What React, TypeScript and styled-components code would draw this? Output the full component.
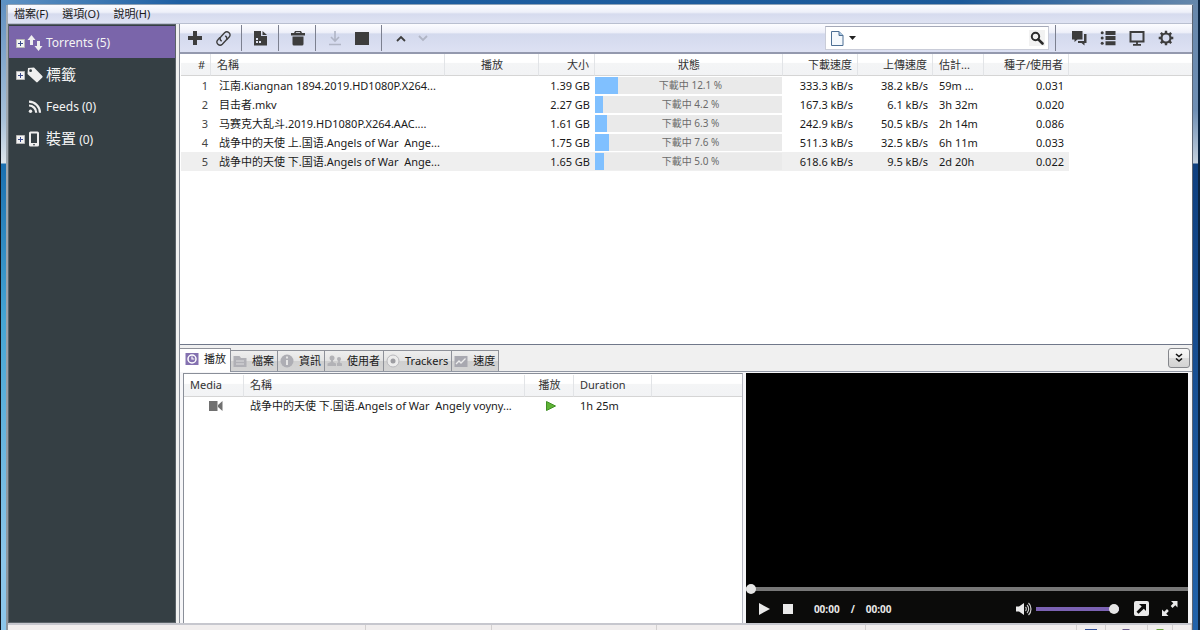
import React from "react";
import styled, { createGlobalStyle, css } from "styled-components";

const Global = createGlobalStyle`
  *, *::before, *::after { box-sizing: border-box; }
  body { margin: 0; }
  body, button, input, table {
    font-family: "Noto Sans", "Noto Sans CJK TC", sans-serif;
    font-size: 11px;
    line-height: 16px;
    color: #1a1a1a;
  }
  button { border: 0; padding: 0; background: none; }
  svg { display: block; flex: none; }
`;

/* ---------- window ---------- */

const Frame = styled.div`
  display: flex;
  height: 100vh;
  padding: 5px 7px 0 8px;
  overflow: hidden;
  background:
    linear-gradient(#10141c, #10141c) left / 1px 100% no-repeat,
    linear-gradient(#0b2440, #0b2440) right / 2px 100% no-repeat,
    linear-gradient(#a5adb4, #8d959c) 6px 5px / 2px 100% no-repeat,
    linear-gradient(90deg, #5f93c4, #1f60a3 15%, #1c5a9a 80%, #6688ac) top / 100% 4px no-repeat,
    linear-gradient(#5f8fc0 0, #a9c2da 120px, #dde5ec 163px, #1a6fb0 164px, #45a5d4 320px, #8cc6ea 560px) left / 8px 100% no-repeat,
    linear-gradient(#6787ab 0, #6f8fb4 110px, #c3d0de 163px, #0f4080 164px, #2163ab 100%) right / 7px 100% no-repeat,
    #8fa3b8;
`;

const Window = styled.div`
  flex: 1;
  min-width: 0;
  display: flex;
  flex-direction: column;
  border-right: 1px solid #5b6472;
  background: #f0f0f0;
`;

const MenuBar = styled.nav`
  display: flex;
  align-items: center;
  gap: 14px;
  height: 19px;
  padding: 0 6px;
  border-bottom: 1px solid #b9bfd0;
  background: linear-gradient(#fbfcff 0, #eef0f9 40%, #d6dbee 50%, #dfe3f3 100%);
`;

const MenuItem = styled.button`
  line-height: 18px;
`;

const Body = styled.div`
  flex: 1;
  min-height: 0;
  display: flex;
  border-bottom: 2px solid #c6c7ce;
`;

/* ---------- sidebar ---------- */

const Sidebar = styled.nav`
  flex: none;
  width: 168px;
  padding-top: 1px;
  border: 1px solid #5a6268;
  background: #353f44;
`;

const SideList = styled.ul`
  margin: 0;
  padding: 0;
  list-style: none;
`;

const SideItem = styled.li<{ $active?: boolean }>`
  display: flex;
  align-items: center;
  height: 32px;
  padding-top: 2px;
  padding-left: 7px;
  background: ${(p) => (p.$active ? "#7a65aa" : "transparent")};
`;

const ExpanderSlot = styled.span`
  width: 9px;
`;

const Expander = styled.button`
  display: block;
`;

const SideLink = styled.a`
  display: flex;
  align-items: center;
  gap: 3px;
  padding-left: 2px;
  color: #f4f4f4;
  font-size: 12px;
  text-decoration: none;
`;

const SideText = styled.span`
  white-space: pre;
`;

const SideCjk = styled.span`
  font-size: 15px;
`;

/* ---------- toolbar ---------- */

const Main = styled.main`
  flex: 1;
  min-width: 0;
  display: flex;
  flex-direction: column;
  margin-left: 3px;
  border-left: 1px solid #8a8f99;
`;

const Toolbar = styled.div`
  display: flex;
  align-items: center;
  height: 30px;
  padding-right: 12px;
  border-bottom: 2px solid #9499ae;
  background: linear-gradient(#fcfcff 0, #eef0f9 30%, #d3d9ed 36%, #dde1f3 100%);
`;

const ToolButton = styled.button<{ $narrow?: boolean }>`
  display: flex;
  align-items: center;
  justify-content: center;
  width: ${(p) => (p.$narrow ? 22 : 29)}px;
  height: 26px;
  color: #3d3d3d;
  &:disabled { color: #b0b5c5; }
`;

const ToolSep = styled.span<{ $wide?: boolean }>`
  width: 1px;
  height: 26px;
  margin: 0 ${(p) => (p.$wide ? 8 : 4)}px 0 3px;
  background: #7c8090;
`;

const Search = styled.form`
  display: flex;
  align-items: center;
  width: 224px;
  height: 24px;
  margin: 0 3px 0 auto;
  padding: 0 3px 0 5px;
  border: 1px solid #c9ccd8;
  border-top-color: #a5a9b8;
  background: #fff;
`;

const SearchInput = styled.input`
  flex: 1;
  min-width: 0;
  border: 0;
  outline: 0;
  background: none;
`;

const FilterButton = styled.button`
  display: flex;
  align-items: center;
  gap: 5px;
`;

const FindButton = styled.button`
  padding: 1px;
  background: #f2f2f2;
`;

/* ---------- tables ---------- */

const TorrentPane = styled.section`
  flex: 291 1 0;
  min-height: 0;
  overflow: hidden;
  padding-left: 1px;
  border-bottom: 1px solid #70788a;
  background: #fff;
`;

const DataTable = styled.table`
  width: 100%;
  table-layout: fixed;
  border-collapse: separate;
  border-spacing: 0;
`;

const Th = styled.th<{ $align?: string }>`
  height: 22px;
  padding: 0 5px 0 6px;
  border-right: 1px solid #e2e4e7;
  border-bottom: 1px solid #d5d5d5;
  background: linear-gradient(#fff 0, #fff 40%, #f4f5f6 45%, #f2f3f5 100%);
  color: #333;
  font-weight: 400;
  text-align: ${(p) => p.$align ?? "left"};
  white-space: nowrap;
  overflow: hidden;
  &:last-child { border-right: 0; }
`;

const Td = styled.td<{ $align?: string; $shade?: boolean; $kind?: "index" | "name" | "bar" }>`
  height: 19px;
  padding: 0 5px 0 6px;
  background: ${(p) => (p.$shade ? "#efefef" : "transparent")};
  text-align: ${(p) => p.$align ?? "left"};
  white-space: pre;
  overflow: hidden;
  ${(p) => p.$kind === "index" && css`padding: 0 3px 0 0; color: #444;`}
  ${(p) => p.$kind === "name" && css`padding: 0 0 0 8px;`}
  ${(p) => p.$kind === "bar" && css`padding: 0 1px 0 0;`}
`;

const Simplified = styled.span`
  font-family: "Noto Sans", "Noto Sans CJK SC", sans-serif;
`;

const Bar = styled.div`
  display: grid;
  height: 17px;
  background: #eaeaea;
`;

const BarFill = styled.div`
  grid-area: 1 / 1;
  background: #80c0ff;
`;

const BarText = styled.span`
  grid-area: 1 / 1;
  padding-left: 4px;
  color: #6a6a6a;
  font-size: 10px;
  text-align: center;
`;

/* ---------- details ---------- */

const Details = styled.section`
  flex: 279 1 0;
  min-height: 0;
  display: flex;
  flex-direction: column;
  background: #f0f0f0;
`;

const TabRow = styled.div`
  display: flex;
  align-items: center;
  justify-content: space-between;
  height: 27px;
  padding-right: 2px;
  border-bottom: 1px solid #9197a3;
`;

const Tabs = styled.div`
  display: flex;
  align-items: flex-end;
  align-self: flex-end;
`;

const Tab = styled.button<{ $active?: boolean }>`
  display: flex;
  align-items: center;
  gap: 5px;
  height: 21px;
  padding: 0 3px 0 2px;
  border: 1px solid #8e9199;
  border-width: 1px 1px 0 0;
  background: linear-gradient(#eeeeee 0, #e4e4e4 48%, #d0d0d0 50%, #d4d4d4 100%);
  ${(p) =>
    p.$active &&
    css`
      height: 24px;
      margin-bottom: -1px;
      padding: 0 4px 2px 5px;
      background: #fff;
    `}
`;

const Collapse = styled.button`
  display: flex;
  align-items: center;
  justify-content: center;
  width: 22px;
  height: 20px;
  border: 1px solid #85878c;
  border-radius: 3px;
  background: linear-gradient(#f8f8f8 0, #ededed 50%, #dcdcdc 52%, #d3d3d3 100%);
`;

const Panels = styled.div`
  flex: 1;
  min-height: 0;
  display: flex;
  gap: 3px;
  padding: 1px 4px 0 3px;
  background: #f6f6f8;
`;

const MediaPane = styled.div`
  flex: 559 1 0;
  min-width: 0;
  overflow: hidden;
  padding-top: 1px;
  border: 1px solid #8a8f99;
  border-bottom: 0;
  border-right-color: #b5b6c0;
  background: #fff;
`;

const MediaIcon = styled.span`
  display: flex;
  justify-content: center;
  padding-left: 2px;
`;

/* ---------- player ---------- */

const Player = styled.div`
  flex: 443 1 0;
  min-width: 0;
  display: flex;
  flex-direction: column;
  background: #000;
`;

const Video = styled.div`
  flex: 1;
`;

const Slider = styled.input<{ $track: string }>`
  appearance: none;
  display: block;
  width: 100%;
  height: 10px;
  margin: 0;
  background: none;
  &::-webkit-slider-runnable-track {
    height: 4px;
    background: ${(p) => p.$track};
  }
  &::-webkit-slider-thumb {
    appearance: none;
    width: 10px;
    height: 10px;
    margin-top: -3px;
    border-radius: 50%;
    background: #e6e6e6;
  }
`;

const SeekRow = styled.div`
  background: linear-gradient(#000 0, #000 50%, #0b0b0a 50%);
`;

const Controls = styled.div`
  display: flex;
  align-items: center;
  height: 29px;
  padding: 0 10px 0 12px;
  background: #0b0b0a;
`;

const Transport = styled.div`
  display: flex;
  align-items: center;
  gap: 13px;
`;

const Clock = styled.div`
  display: flex;
  gap: 11px;
  margin: 0 auto 0 21px;
  color: #e8e8e8;
  font-family: "Open Sans", sans-serif;
  font-size: 10px;
  font-weight: 700;
`;

const Volume = styled.div`
  display: flex;
  align-items: center;
  gap: 4px;
  width: 103px;
  margin-right: 15px;
`;

const ViewButtons = styled.div`
  display: flex;
  align-items: center;
  gap: 13px;
`;

/* ---------- status bar ---------- */

const StatusBar = styled.footer`
  display: flex;
  height: 5px;
  overflow: hidden;
  background: #f1eeee;
`;

const StatusCell = styled.span<{ $grow: number }>`
  flex: ${(p) => p.$grow} 1 0;
  display: flex;
  justify-content: center;
  padding-top: 4px;
  border-right: 1px solid #d3d0d0;
`;

/* ---------- icons ---------- */

const Plus = () => (
  <svg width="16" height="16" viewBox="0 0 16 16" fill="currentColor">
    <path d="M6 1h4v5h5v4h-5v5H6v-5H1V6h5z" />
  </svg>
);
const LinkIcon = () => (
  <svg width="17" height="17" viewBox="0 0 17 17" fill="none" stroke="currentColor" strokeWidth="1.4" strokeLinecap="round">
    <path d="M6.300 10.800c-1.500-1-1.600-2.900-.4-4.100l3.700-3.900c2.800-2.800 7.400 1.300 4.600 4.200l-2.300 2.400" />
    <path d="M10.600 6.200c1.500 1 1.600 2.900.4 4.100l-3.700 3.900c-2.800 2.800-7.400-1.300-4.600-4.200l2-2.200" />
  </svg>
);
const NewTorrent = () => (
  <svg width="14" height="16" viewBox="0 0 14 16" fill="currentColor">
    <path d="M0 1h7v5h6v9.500H0z" />
    <path d="M8.500 1l4.500 4H8.500z" />
    <path d="M2 8h2v2H2zM2 11h2v2H2zM5 11h2v2H5z" fill="#dfe3f2" />
  </svg>
);
const Trash = () => (
  <svg width="16" height="16" viewBox="0 0 16 16" fill="currentColor">
    <path d="M5 1h6l1 2h3v2.500H1V3h3zM6 2.200L5.700 3h4.600L10 2.200z" fillRule="evenodd" />
    <path d="M2.500 6.500h11v7.500a1.500 1.500 0 0 1-1.500 1.500H4a1.500 1.500 0 0 1-1.500-1.500z" />
  </svg>
);
const Download = () => (
  <svg width="14" height="16" viewBox="0 0 14 16" fill="none" stroke="currentColor" strokeWidth="1.600">
    <path d="M7 1v10M3 7l4 4 4-4M1 14.500h12" />
  </svg>
);
const StopIcon = () => (
  <svg width="17" height="14" viewBox="0 0 17 14" fill="currentColor">
    <path d="M0 1h14v13H0z" />
  </svg>
);
const Chevron = ({ down }: { down?: boolean }) => (
  <svg width="10" height="7" viewBox="0 0 10 7" fill="none" stroke="currentColor" strokeWidth="1.800">
    <path d={down ? "M1 1l4 4 4-4" : "M1 6l4-4 4 4"} />
  </svg>
);
const PageIcon = () => (
  <svg width="13" height="15" viewBox="0 0 13 15" fill="#f5f9fd" stroke="#4d6f94" strokeWidth="1">
    <path d="M.5.500h7.500l4 4v10H.5z" />
    <path d="M8 .5v4h4" fill="#a9c6e2" />
  </svg>
);
const Caret = () => (
  <svg width="7" height="4" viewBox="0 0 7 4" fill="#222"><path d="M0 0h7L3.500 4z" /></svg>
);
const Magnifier = () => (
  <svg width="14" height="14" viewBox="0 0 14 14" fill="none" stroke="#2b2b2b">
    <circle cx="5.500" cy="5.500" r="3.700" strokeWidth="2" />
    <path d="M8.300 8.300l4.200 4.200" strokeWidth="2.600" strokeLinecap="round" />
  </svg>
);
const Chat = () => (
  <svg width="16" height="16" viewBox="0 0 16 16" fill="currentColor">
    <path d="M1 1h10.500v8.500H6.500L3.500 12V9.500H1z" />
    <path d="M13 4h2.500v9h-2v2.500L10.500 13H7v-2h6z" />
  </svg>
);
const ListIcon = () => (
  <svg width="16" height="16" viewBox="0 0 16 16" fill="currentColor">
    <path d="M5.500 1H15.500v4H5.500zM5.500 6H15.500v4H5.500zM5.500 11.200H15.500V15.200H5.500z" />
    <circle cx="2.200" cy="2.800" r="1.500" /><circle cx="2.200" cy="8" r="1.500" /><circle cx="2.200" cy="13.200" r="1.500" />
  </svg>
);
const Monitor = () => (
  <svg width="16" height="16" viewBox="0 0 16 16" fill="none" stroke="currentColor">
    <path d="M1.500 2h13v9.500h-13z" strokeWidth="2" />
    <path d="M8 11.500v3M4 14.800h8" strokeWidth="1.800" />
  </svg>
);
const Gear = () => (
  <svg width="16" height="16" viewBox="0 0 16 16" fill="none" stroke="currentColor">
    <circle cx="8" cy="8" r="4.500" strokeWidth="2.200" />
    <path d="M8 .7v2.500M8 12.800v2.500M.7 8H3.200M12.800 8h2.500M2.800 2.800l1.800 1.800M11.400 11.400l1.800 1.800M13.200 2.800l-1.800 1.800M4.600 11.400l-1.800 1.800" strokeWidth="2.400" />
  </svg>
);
const PlusBox = () => (
  <svg width="9" height="9" viewBox="0 0 9 9">
    <path d="M.5.500h8v8h-8z" fill="#f3f3f3" stroke="#b8b8b8" />
    <path d="M2 4.500h5M4.500 2v5" stroke="#3a4a8a" />
  </svg>
);
const UpDown = () => (
  <svg width="16" height="16" viewBox="0 0 16 16" fill="#efefef">
    <path d="M4.500 0l4 5H6v5H3V5H.5zM11.500 16l-4-5H10V6h3v5h2.500z" />
  </svg>
);
const TagIcon = () => (
  <svg width="16" height="16" viewBox="0 0 16 16" fill="#efefef">
    <path d="M1 1l6-.5 8.300 8.500c.5.500.5 1 0 1.500l-4.600 4.600c-.5.500-1 .5-1.500 0L.5 7zM3.600 2.300a1.400 1.400 0 1 0 0 2.800 1.400 1.400 0 0 0 0-2.800z" fillRule="evenodd" />
  </svg>
);
const RssIcon = () => (
  <svg width="16" height="16" viewBox="0 0 16 16" fill="none" stroke="#efefef" strokeWidth="2.200">
    <path d="M2 6.500c4 0 7.200 3.200 7.200 7.200M2 2.700c6.100 0 11 4.900 11 11" />
    <circle cx="3.500" cy="12.200" r="1.700" fill="#efefef" stroke="none" />
  </svg>
);
const DeviceIcon = () => (
  <svg width="16" height="16" viewBox="0 0 16 16" fill="#efefef">
    <path d="M3.500.500h7a1.500 1.500 0 0 1 1.500 1.500v12a1.500 1.500 0 0 1-1.500 1.500h-7A1.500 1.500 0 0 1 2 14V2A1.500 1.500 0 0 1 3.500.500zM4 2.500v9.500h6V2.500zM6 13.200h2v1H6z" fillRule="evenodd" />
  </svg>
);
const ClockIcon = () => (
  <svg width="14" height="14" viewBox="0 0 14 14">
    <path d="M.5 1h13v12H.5z" fill="#8471b0" />
    <circle cx="7" cy="7" r="4" fill="#8471b0" stroke="#fff" strokeWidth="1.500" />
    <path d="M7 4.500V7h2.300" fill="none" stroke="#fff" strokeWidth="1.200" />
  </svg>
);
const FolderIcon = () => (
  <svg width="14" height="14" viewBox="0 0 14 14" fill="#b0b0b6">
    <path d="M.5 2h6l1.500 2h5.500v9H.5z" />
    <path d="M3 7h8M3 10h8" stroke="#dcdcde" />
  </svg>
);
const InfoIcon = () => (
  <svg width="14" height="14" viewBox="0 0 14 14">
    <circle cx="7" cy="7" r="6.500" fill="#aeaeb4" />
    <path d="M7 2.500v2M7 6v5" stroke="#e6e6e6" strokeWidth="2" />
  </svg>
);
const PeersIcon = () => (
  <svg width="15" height="14" viewBox="0 0 15 14" fill="#b2b2b6">
    <circle cx="5" cy="4" r="2.500" />
    <path d="M4 6h2v2l3 1.500V12H.5V9.500L4 8z" />
    <circle cx="12" cy="5" r="2" />
    <path d="M11.300 6h1.500v2.500l2.200 1V12h-5V9l1.300-.5z" />
  </svg>
);
const TargetIcon = () => (
  <svg width="14" height="14" viewBox="0 0 14 14">
    <circle cx="7" cy="7" r="6" fill="#ececec" stroke="#b8b8bc" />
    <circle cx="7" cy="7" r="2.500" fill="#9d9da2" />
  </svg>
);
const GraphIcon = () => (
  <svg width="14" height="14" viewBox="0 0 14 14">
    <path d="M.5 2h13v11H.5z" fill="#a8a8b0" />
    <path d="M2 10l3-3 2 2 4.500-4.500" fill="none" stroke="#ededed" strokeWidth="1.300" />
  </svg>
);
const Chevrons = () => (
  <svg width="8" height="10" viewBox="0 0 8 10" fill="none" stroke="#111" strokeWidth="1.600">
    <path d="M1 1l3 2.500L7 1M1 5.500L4 8l3-2.500" />
  </svg>
);
const Camera = () => (
  <svg width="14" height="12" viewBox="0 0 14 12" fill="#707070">
    <path d="M0 1h8.500v10H0zM9 5L13.500 1v10l-4.500-4z" />
  </svg>
);
const GreenPlay = () => (
  <svg width="10" height="10" viewBox="0 0 10 10"><path d="M.5.500L9.500 5l-9 4.500z" fill="#5fb336" stroke="#3f8f24" /></svg>
);
const PlayIcon = () => (
  <svg width="12" height="12" viewBox="0 0 12 12" fill="#eaeaea"><path d="M1 0l11 6-11 6z" /></svg>
);
const StopSmall = () => (
  <svg width="10" height="10" viewBox="0 0 10 10" fill="#eaeaea"><path d="M0 0h10v10H0z" /></svg>
);
const Speaker = () => (
  <svg width="16" height="14" viewBox="0 0 16 14" fill="#eaeaea">
    <path d="M0 4.500h3L8 1v12L3 9.500H0z" />
    <path d="M9.500 5c1 1 1 3 0 4M11 3c2.200 2 2.200 6 0 8M12.500 1c3.300 3 3.300 9 0 12" fill="none" stroke="#cfcfcf" strokeWidth="1.200" />
  </svg>
);
const PopOut = () => (
  <svg width="15" height="15" viewBox="0 0 15 15">
    <rect width="15" height="15" rx="2" fill="#eaeaea" />
    <path d="M5 3h7v7l-2.200-2.200-5.300 5-2-2 5.200-5.200z" fill="#0b0b0a" />
  </svg>
);
const Expand = () => (
  <svg width="16" height="15" viewBox="0 0 16 15" fill="#eaeaea">
    <path d="M9 0h6.500v6.500l-2.200-2.200-2.800 2.600-1.800-1.800 2.600-2.800z" />
    <path d="M6.500 15H0V8.500l2.200 2.200 2.800-2.600 1.800 1.800-2.600 2.800z" />
  </svg>
);

/* ---------- data ---------- */

const torrents = [
  { name: "江南.Kiangnan 1894.2019.HD1080P.X264...", size: "1.39 GB", pct: 12.1, down: "333.3 kB/s", up: "38.2 kB/s", eta: "59m ...", ratio: "0.031" },
  { name: "目击者.mkv", size: "2.27 GB", pct: 4.2, down: "167.3 kB/s", up: "6.1 kB/s", eta: "3h 32m", ratio: "0.020" },
  { name: "马赛克大乱斗.2019.HD1080P.X264.AAC....", size: "1.61 GB", pct: 6.3, down: "242.9 kB/s", up: "50.5 kB/s", eta: "2h 14m", ratio: "0.086" },
  { name: "战争中的天使 上.国语.Angels of War  Ange...", size: "1.75 GB", pct: 7.6, down: "511.3 kB/s", up: "32.5 kB/s", eta: "6h 11m", ratio: "0.033" },
  { name: "战争中的天使 下.国语.Angels of War  Ange...", size: "1.65 GB", pct: 5.0, down: "618.6 kB/s", up: "9.5 kB/s", eta: "2d 20h", ratio: "0.022" },
];

const columns = [
  { label: "#", width: 30, align: "right" },
  { label: "名稱", width: 234 },
  { label: "播放", width: 94, align: "center" },
  { label: "大小", width: 56, align: "right" },
  { label: "狀態", width: 188, align: "center" },
  { label: "下載速度", width: 75, align: "right" },
  { label: "上傳速度", width: 75, align: "right" },
  { label: "估計...", width: 51 },
  { label: "種子/使用者", width: 85, align: "right" },
];

const mediaColumns = [
  { label: "Media", width: 60 },
  { label: "名稱", width: 281 },
  { label: "播放", width: 49, align: "center" },
  { label: "Duration", width: 78 },
];

const tabs = [
  { label: "播放", icon: <ClockIcon /> },
  { label: "檔案", icon: <FolderIcon /> },
  { label: "資訊", icon: <InfoIcon /> },
  { label: "使用者", icon: <PeersIcon /> },
  { label: "Trackers", icon: <TargetIcon /> },
  { label: "速度", icon: <GraphIcon /> },
];

const sideItems = [
  { text: "Torrents (5)", icon: <UpDown />, expandable: true },
  { cjk: "標籤", icon: <TagIcon />, expandable: true },
  { text: "Feeds (0)", icon: <RssIcon />, expandable: false },
  { cjk: "裝置", text: " (0)", icon: <DeviceIcon />, expandable: true },
];

type Column = { label: string; width: number; align?: string };

function TableHead({ cols }: { cols: Column[] }) {
  return (
    <>
      <colgroup>
        {cols.map((c) => <col key={c.label} width={c.width} />)}
        <col />
      </colgroup>
      <thead>
        <tr>
          {cols.map((c) => <Th key={c.label} $align={c.align} scope="col">{c.label}</Th>)}
          <Th as="td" />
        </tr>
      </thead>
    </>
  );
}

export default function App() {
  return (
    <Frame>
      <Global />
      <Window>
        <MenuBar>
          <MenuItem>檔案(F)</MenuItem>
          <MenuItem>選項(O)</MenuItem>
          <MenuItem>說明(H)</MenuItem>
        </MenuBar>
        <Body>
          <Sidebar>
            <SideList>
              {sideItems.map((item, i) => (
                <SideItem key={i} $active={i === 0}>
                  <ExpanderSlot>
                    {item.expandable && <Expander aria-label="Expand"><PlusBox /></Expander>}
                  </ExpanderSlot>
                  <SideLink href="#">
                    {item.icon}
                    <SideText>
                      {item.cjk && <SideCjk>{item.cjk}</SideCjk>}
                      {item.text}
                    </SideText>
                  </SideLink>
                </SideItem>
              ))}
            </SideList>
          </Sidebar>
          <Main>
            <Toolbar>
              <ToolButton aria-label="Add"><Plus /></ToolButton>
              <ToolButton aria-label="Add link"><LinkIcon /></ToolButton>
              <ToolSep />
              <ToolButton aria-label="Create torrent"><NewTorrent /></ToolButton>
              <ToolSep />
              <ToolButton aria-label="Remove"><Trash /></ToolButton>
              <ToolSep />
              <ToolButton aria-label="Start" disabled><Download /></ToolButton>
              <ToolButton aria-label="Stop"><StopIcon /></ToolButton>
              <ToolSep $wide />
              <ToolButton aria-label="Move up" $narrow><Chevron /></ToolButton>
              <ToolButton aria-label="Move down" $narrow disabled><Chevron down /></ToolButton>
              <Search role="search">
                <FilterButton type="button" aria-label="Search source"><PageIcon /><Caret /></FilterButton>
                <SearchInput type="text" aria-label="Search" />
                <FindButton type="submit" aria-label="Find"><Magnifier /></FindButton>
              </Search>
              <ToolSep $wide />
              <ToolButton aria-label="Chat"><Chat /></ToolButton>
              <ToolButton aria-label="List"><ListIcon /></ToolButton>
              <ToolButton aria-label="Remote"><Monitor /></ToolButton>
              <ToolButton aria-label="Settings"><Gear /></ToolButton>
            </Toolbar>
            <TorrentPane>
              <DataTable>
                <TableHead cols={columns} />
                <tbody>
                  {torrents.map((t, i) => {
                    const shade = i === torrents.length - 1;
                    return (
                      <tr key={i}>
                        <Td $align="right" $kind="index" $shade={shade}>{i + 1}</Td>
                        <Td $kind="name" $shade={shade}><Simplified lang="zh-Hans">{t.name}</Simplified></Td>
                        <Td $shade={shade} />
                        <Td $align="right" $shade={shade}>{t.size}</Td>
                        <Td $kind="bar" $shade={shade}>
                          <Bar>
                            <BarFill style={{ width: `${t.pct}%` }} />
                            <BarText>下載中 {t.pct.toFixed(1)} %</BarText>
                          </Bar>
                        </Td>
                        <Td $align="right" $shade={shade}>{t.down}</Td>
                        <Td $align="right" $shade={shade}>{t.up}</Td>
                        <Td $shade={shade}>{t.eta}</Td>
                        <Td $align="right" $shade={shade}>{t.ratio}</Td>
                        <Td />
                      </tr>
                    );
                  })}
                </tbody>
              </DataTable>
            </TorrentPane>
            <Details>
              <TabRow>
                <Tabs role="tablist">
                  {tabs.map((t, i) => (
                    <Tab key={t.label} role="tab" aria-selected={i === 0} $active={i === 0}>
                      {t.icon}
                      {t.label}
                    </Tab>
                  ))}
                </Tabs>
                <Collapse aria-label="Collapse"><Chevrons /></Collapse>
              </TabRow>
              <Panels>
                <MediaPane>
                  <DataTable>
                    <TableHead cols={mediaColumns} />
                    <tbody>
                      <tr>
                        <Td><MediaIcon><Camera /></MediaIcon></Td>
                        <Td><Simplified lang="zh-Hans">战争中的天使 下.国语.Angels of War  Angely voyny...</Simplified></Td>
                        <Td><MediaIcon><GreenPlay /></MediaIcon></Td>
                        <Td>1h 25m</Td>
                        <Td />
                      </tr>
                    </tbody>
                  </DataTable>
                </MediaPane>
                <Player>
                  <Video />
                  <SeekRow>
                    <Slider type="range" aria-label="Position" defaultValue={0} $track="#777" />
                  </SeekRow>
                  <Controls>
                    <Transport>
                      <button aria-label="Play"><PlayIcon /></button>
                      <button aria-label="Stop playback"><StopSmall /></button>
                    </Transport>
                    <Clock>
                      <span>00:00</span>
                      <span>/</span>
                      <span>00:00</span>
                    </Clock>
                    <Volume>
                      <button aria-label="Mute"><Speaker /></button>
                      <Slider type="range" aria-label="Volume" defaultValue={100} $track="#7b62b3" />
                    </Volume>
                    <ViewButtons>
                      <button aria-label="Pop out"><PopOut /></button>
                      <button aria-label="Full screen"><Expand /></button>
                    </ViewButtons>
                  </Controls>
                </Player>
              </Panels>
            </Details>
          </Main>
        </Body>
        <StatusBar>
          <StatusCell $grow={360} />
          <StatusCell $grow={126} />
          <StatusCell $grow={165} />
          <StatusCell $grow={210} />
          <StatusCell $grow={211} />
          <StatusCell $grow={28}>
            <svg width="12" height="12" viewBox="0 0 12 12"><path d="M0 0h12v10H0z" fill="#2f4f9a" /></svg>
          </StatusCell>
          <StatusCell $grow={42}>
            <svg width="12" height="12" viewBox="0 0 12 12"><path d="M3 0h6l3 3v6l-3 3H3L0 9V3z" fill="#6a5a8c" /></svg>
          </StatusCell>
          <StatusCell $grow={24}>
            <svg width="12" height="12" viewBox="0 0 12 12"><path d="M3 0h6l3 3v6l-3 3H3L0 9V3z" fill="#6aa83a" /></svg>
          </StatusCell>
          <StatusCell $grow={18} />
        </StatusBar>
      </Window>
    </Frame>
  );
}
